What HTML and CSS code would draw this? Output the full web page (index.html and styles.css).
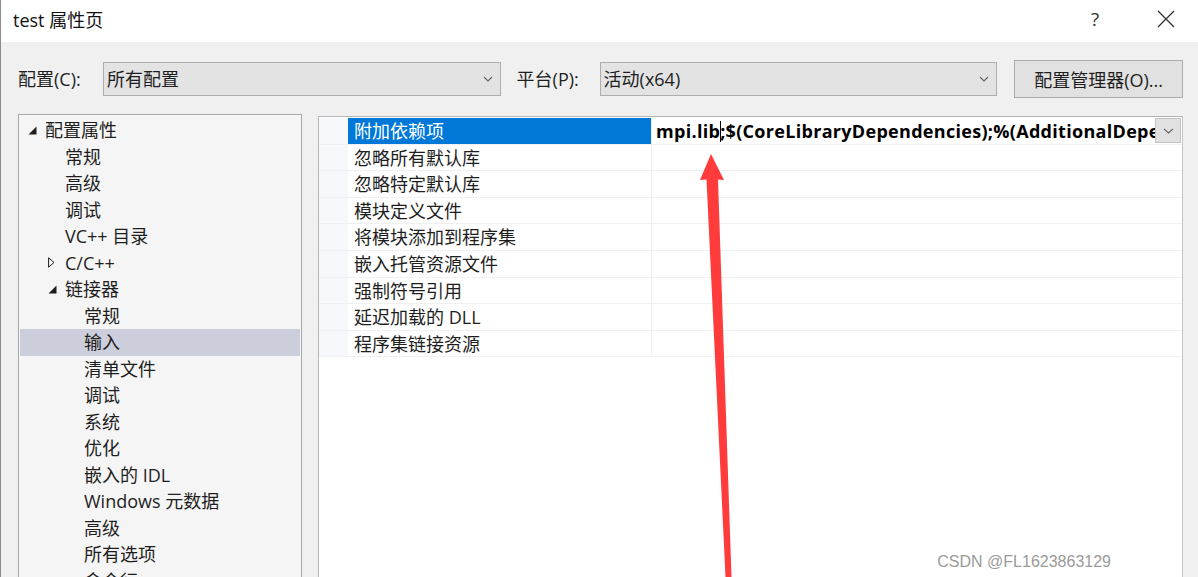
FILE: index.html
```html
<!DOCTYPE html>
<html>
    <head>
        <meta charset="UTF-8">
        <title>test 属性页</title>
        <meta name="viewport" content="width=device-width, initial-scale=1.0">
        <link rel="stylesheet" href="styles.css">
    </head>
    <body>
        <div class="window">
            <header class="titlebar">
                <span class="title">test 属性页</span>
                <span class="help">?</span>
                <span class="close">
                    <svg width="18" height="18" viewBox="0 0 18 18"><path d="M1 1L17 17M17 1L1 17" stroke="#333" stroke-width="1.3" fill="none"/></svg>
                </span>
            </header>

            <div class="content">
                <div class="toolbar">
                    <label class="label first">配置(C):</label>
                    <div class="select">
                        <span>所有配置</span>
                        <svg class="chevron" width="10" height="6" viewBox="0 0 10 6"><path d="M1 1L5 5L9 1" stroke="#606060" stroke-width="1.1" fill="none"/></svg>
                    </div>
                    <label class="label second">平台(P):</label>
                    <div class="select">
                        <span>活动(x64)</span>
                        <svg class="chevron" width="10" height="6" viewBox="0 0 10 6"><path d="M1 1L5 5L9 1" stroke="#606060" stroke-width="1.1" fill="none"/></svg>
                    </div>
                    <button class="manager">配置管理器(O)...</button>
                </div>

                <div class="main">
                    <div class="tree">
                        <div class="node lvl1"><span class="toggle"><svg width="9" height="9" viewBox="0 0 9 9"><path d="M8.5 0.5V8.5H0.5Z" fill="#1e1e1e"/></svg></span>配置属性</div>
                        <div class="node lvl2"><span class="toggle"></span>常规</div>
                        <div class="node lvl2"><span class="toggle"></span>高级</div>
                        <div class="node lvl2"><span class="toggle"></span>调试</div>
                        <div class="node lvl2"><span class="toggle"></span>VC++ 目录</div>
                        <div class="node lvl2"><span class="toggle"><svg width="7" height="11" viewBox="0 0 7 11"><path d="M0.6 0.8L6 5.5L0.6 10.2Z" fill="none" stroke="#1e1e1e" stroke-width="1"/></svg></span>C/C++</div>
                        <div class="node lvl2"><span class="toggle"><svg width="9" height="9" viewBox="0 0 9 9"><path d="M8.5 0.5V8.5H0.5Z" fill="#1e1e1e"/></svg></span>链接器</div>
                        <div class="node lvl3"><span class="toggle"></span>常规</div>
                        <div class="node lvl3 selected"><span class="toggle"></span>输入</div>
                        <div class="node lvl3"><span class="toggle"></span>清单文件</div>
                        <div class="node lvl3"><span class="toggle"></span>调试</div>
                        <div class="node lvl3"><span class="toggle"></span>系统</div>
                        <div class="node lvl3"><span class="toggle"></span>优化</div>
                        <div class="node lvl3"><span class="toggle"></span>嵌入的 IDL</div>
                        <div class="node lvl3"><span class="toggle"></span>Windows 元数据</div>
                        <div class="node lvl3"><span class="toggle"></span>高级</div>
                        <div class="node lvl3"><span class="toggle"></span>所有选项</div>
                        <div class="node lvl3"><span class="toggle"></span>命令行</div>
                    </div>

                    <div class="grid">
                        <div class="row active">
                            <div class="gutter"></div>
                            <div class="name">附加依赖项</div>
                            <div class="value"><span class="text">mpi.lib<span class="caret"></span>;$(CoreLibraryDependencies);%(AdditionalDependencies)</span>
                                <span class="drop"><svg width="11" height="6" viewBox="0 0 11 6"><path d="M1 0.8L5.5 5L10 0.8" stroke="#606060" stroke-width="1.1" fill="none"/></svg></span>
                            </div>
                        </div>
                        <div class="row"><div class="gutter"></div><div class="name">忽略所有默认库</div><div class="value"></div></div>
                        <div class="row"><div class="gutter"></div><div class="name">忽略特定默认库</div><div class="value"></div></div>
                        <div class="row"><div class="gutter"></div><div class="name">模块定义文件</div><div class="value"></div></div>
                        <div class="row"><div class="gutter"></div><div class="name">将模块添加到程序集</div><div class="value"></div></div>
                        <div class="row"><div class="gutter"></div><div class="name">嵌入托管资源文件</div><div class="value"></div></div>
                        <div class="row"><div class="gutter"></div><div class="name">强制符号引用</div><div class="value"></div></div>
                        <div class="row"><div class="gutter"></div><div class="name">延迟加载的 DLL</div><div class="value"></div></div>
                        <div class="row"><div class="gutter"></div><div class="name">程序集链接资源</div><div class="value"></div></div>
                    </div>
                </div>
            </div>

            <!-- annotation drawn over the screenshot -->
            <svg class="arrow" width="1198" height="577" viewBox="0 0 1198 577">
                <path d="M711 154L724 180L718 179.5L731.5 577L725.5 577L706.5 179.5L700 180Z" fill="#ff3b3b"/>
            </svg>
            <div class="watermark">CSDN @FL1623863129</div>
        </div>
    </body>
</html>
```

FILE: styles.css
```css
body
{
    margin: 0;
    padding: 0;
    width: 1198px;
    height: 577px;
    overflow: hidden;
    background: #f0f0f0;
    font-family: 'Open Sans', 'Noto Sans CJK SC', sans-serif;
    font-size: 18px;
    color: #1e1e1e;
}
.window
{
    position: relative;
    height: 577px;
    border-left: 1px solid #8c8c8c;
    display: flex;
    flex-direction: column;
    overflow: hidden;
}

/* title bar */
.titlebar
{
    height: 42px;
    flex: none;
    background: #fff;
    display: flex;
    align-items: center;
    padding-left: 12px;
    padding-bottom: 4px;
    box-sizing: border-box;
}
.titlebar .title
{
    flex: 1;
    color: #111;
}
.titlebar .help
{
    width: 20px;
    margin-right: 46px;
    font-size: 19px;
    color: #333;
}
.titlebar .close
{
    display: flex;
    margin-right: 23px;
}

/* toolbar */
.content
{
    flex: 1;
    padding: 18px 15px 0 17px;
    min-height: 0;
    min-width: 0;
    display: flex;
    flex-direction: column;
}
.toolbar
{
    display: flex;
    align-items: center;
    height: 38px;
    flex: none;
}
.toolbar .label
{
    flex: none;
    line-height: 24px;
}
.toolbar .first { width: 85px; }
.toolbar .second { width: 83px; margin-left: 16px; }
.toolbar .select
{
    width: 398px;
    height: 34px;
    box-sizing: border-box;
    border: 1px solid #adadad;
    background: #e3e3e3;
    display: flex;
    align-items: center;
    justify-content: space-between;
    padding: 0 7px 0 3px;
}
.toolbar .select span { line-height: 24px; }
.toolbar .manager
{
    margin-left: 17px;
    width: 169px;
    height: 38px;
    padding: 0;
    border: 1px solid #adadad;
    background: #e1e1e1;
    font-family: inherit;
    font-size: 18px;
    color: #1e1e1e;
}

/* tree and grid */
.main
{
    flex: 1;
    display: flex;
    margin-top: 16px;
    min-height: 0;
    min-width: 0;
}
.tree
{
    width: 284px;
    flex: none;
    box-sizing: border-box;
    border: 1px solid #a9a9a9;
    border-bottom: none;
    background: #f5f5f5;
    padding: 2px 1px 0 1px;
    overflow: hidden;
}
.tree .node
{
    height: 26.5px;
    line-height: 26.5px;
    display: flex;
    align-items: center;
    white-space: nowrap;
}
.tree .toggle
{
    width: 17px;
    flex: none;
    display: flex;
    align-items: center;
}
.tree .lvl1 { padding-left: 8px; }
.tree .lvl2 { padding-left: 28px; }
.tree .lvl3 { padding-left: 47px; }
.tree .selected { background: #cccedb; }

.grid
{
    flex: 1;
    min-width: 0;
    overflow: hidden;
    margin: 2px 0 0 16px;
    background: #fff;
    border-top: 1px solid #b4b4b4;
    border-left: 1px solid #b4b4b4;
    border-right: 1px solid #c6c6c6;
    padding-top: 1px;
}
.grid .row
{
    display: flex;
    height: 26.6px;
    box-sizing: border-box;
    border-bottom: 1px solid #f0f0f0;
}
.grid .gutter
{
    width: 29px;
    flex: none;
    background: #f6f8fb;
}
.grid .name
{
    width: 304px;
    flex: none;
    box-sizing: border-box;
    padding-left: 6px;
    line-height: 26px;
    border-right: 1px solid #f0f0f0;
    white-space: nowrap;
}
.grid .value
{
    flex: 1;
    display: flex;
    min-width: 0;
}
.grid .active .name
{
    background: #0078d7;
    color: #fff;
}
.grid .value .text
{
    flex: 1;
    min-width: 0;
    overflow: hidden;
    white-space: nowrap;
    padding-left: 4px;
    font-weight: bold;
    letter-spacing: 0.3px;
    line-height: 26px;
    color: #000;
}
.grid .caret
{
    display: inline-block;
    width: 1px;
    height: 21px;
    margin-right: -1px;
    vertical-align: -4px;
    background: #000;
}
.grid .drop
{
    width: 26px;
    height: 25px;
    flex: none;
    box-sizing: border-box;
    margin: 0 1px 0 0;
    border: 1px solid #c3c3c3;
    background: #e1e1e1;
    display: flex;
    align-items: center;
    justify-content: center;
}

/* overlays */
.arrow
{
    position: absolute;
    top: 0;
    left: -1px;
    pointer-events: none;
}
.watermark
{
    position: absolute;
    right: 87px;
    bottom: 6px;
    font-family: 'Liberation Sans', sans-serif;
    font-size: 16px;
    color: #9a9a9a;
    text-shadow: 0 0 1px #fff;
}
```
